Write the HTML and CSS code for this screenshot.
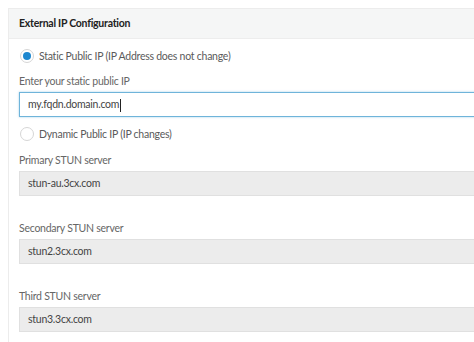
FILE: index.html
```html
<!DOCTYPE html>
<html>
<head>
  <title>External IP Configuration</title>
  <link rel="stylesheet" href="styles.css">
</head>
<body>
  <div class="panel">
    <div class="panel-head">External IP Configuration</div>
    <div class="panel-body">
      <!-- Статический IP -->
      <label class="radio-row first">
        <span class="radio checked"></span>
        <span>Static Public IP (IP Address does not change)</span>
      </label>
      <div class="field first-field">
        <div class="field-label">Enter your static public IP</div>
        <div class="input active">my.fqdn.domain.com<span class="caret"></span></div>
      </div>

      <!-- Динамический IP -->
      <label class="radio-row">
        <span class="radio"></span>
        <span>Dynamic Public IP (IP changes)</span>
      </label>
      <div class="field stun-first">
        <div class="field-label">Primary STUN server</div>
        <div class="input disabled">stun-au.3cx.com</div>
      </div>
      <div class="field stun">
        <div class="field-label">Secondary STUN server</div>
        <div class="input disabled">stun2.3cx.com</div>
      </div>
      <div class="field stun">
        <div class="field-label">Third STUN server</div>
        <div class="input disabled">stun3.3cx.com</div>
      </div>
    </div>
  </div>
</body>
</html>
```

FILE: styles.css
```css
/* Общие стили */
body {
  margin: 0;
  background-color: #fff;
  font-family: Lato, "Open Sans", sans-serif;
  font-size: 10.5px;
  letter-spacing: -0.25px;
  color: #5a5a5a;
  overflow: hidden;
}

/* Панель */
.panel {
  margin: 8px 0 0 8px;
  width: 480px;
  border: 1px solid #ececec;
  border-right: none;
}

.panel-head {
  height: 29px;
  line-height: 29px;
  padding-left: 10px;
  background-color: #f5f6f6;
  border-bottom: 1px solid #ededed;
  font-weight: bold;
  color: #222;
}

.panel-body {
  padding: 0 0 12px 10px;
}

/* Радиокнопки */
.radio-row {
  display: flex;
  align-items: center;
  height: 18px;
  margin-top: 8px;
  color: #5a5a5a;
}

.radio {
  width: 14px;
  height: 14px;
  border: 1px solid #d6d6d6;
  border-radius: 50%;
  margin-left: 1px;
  margin-right: 5px;
  box-sizing: border-box;
  position: relative;
  background: #fff;
}

.radio.checked::after {
  content: "";
  position: absolute;
  left: 2px;
  top: 2px;
  width: 8px;
  height: 8px;
  border-radius: 50%;
  background-color: #1d87cf;
}

/* Поля */
.field-label {
  height: 16px;
  line-height: 16px;
  color: #666;
}

.input {
  height: 25px;
  line-height: 23px;
  margin-top: 3px;
  padding-left: 8px;
  border: 1px solid #dcdcdc;
  box-sizing: border-box;
  color: #444;
}

.input.active {
  border-color: #6fb4da;
  box-shadow: 0 0 2px rgba(102, 175, 217, 0.6);
}

.input.disabled {
  background-color: #ececec;
  border-color: #e0e0e0;
}

.caret {
  display: inline-block;
  width: 1px;
  height: 13px;
  background: #222;
  vertical-align: middle;
  margin-left: 1px;
}

.first-field {
  margin-top: 8px;
}

.stun-first {
  margin-top: 9px;
}

.stun {
  margin-top: 24px;
}
```
